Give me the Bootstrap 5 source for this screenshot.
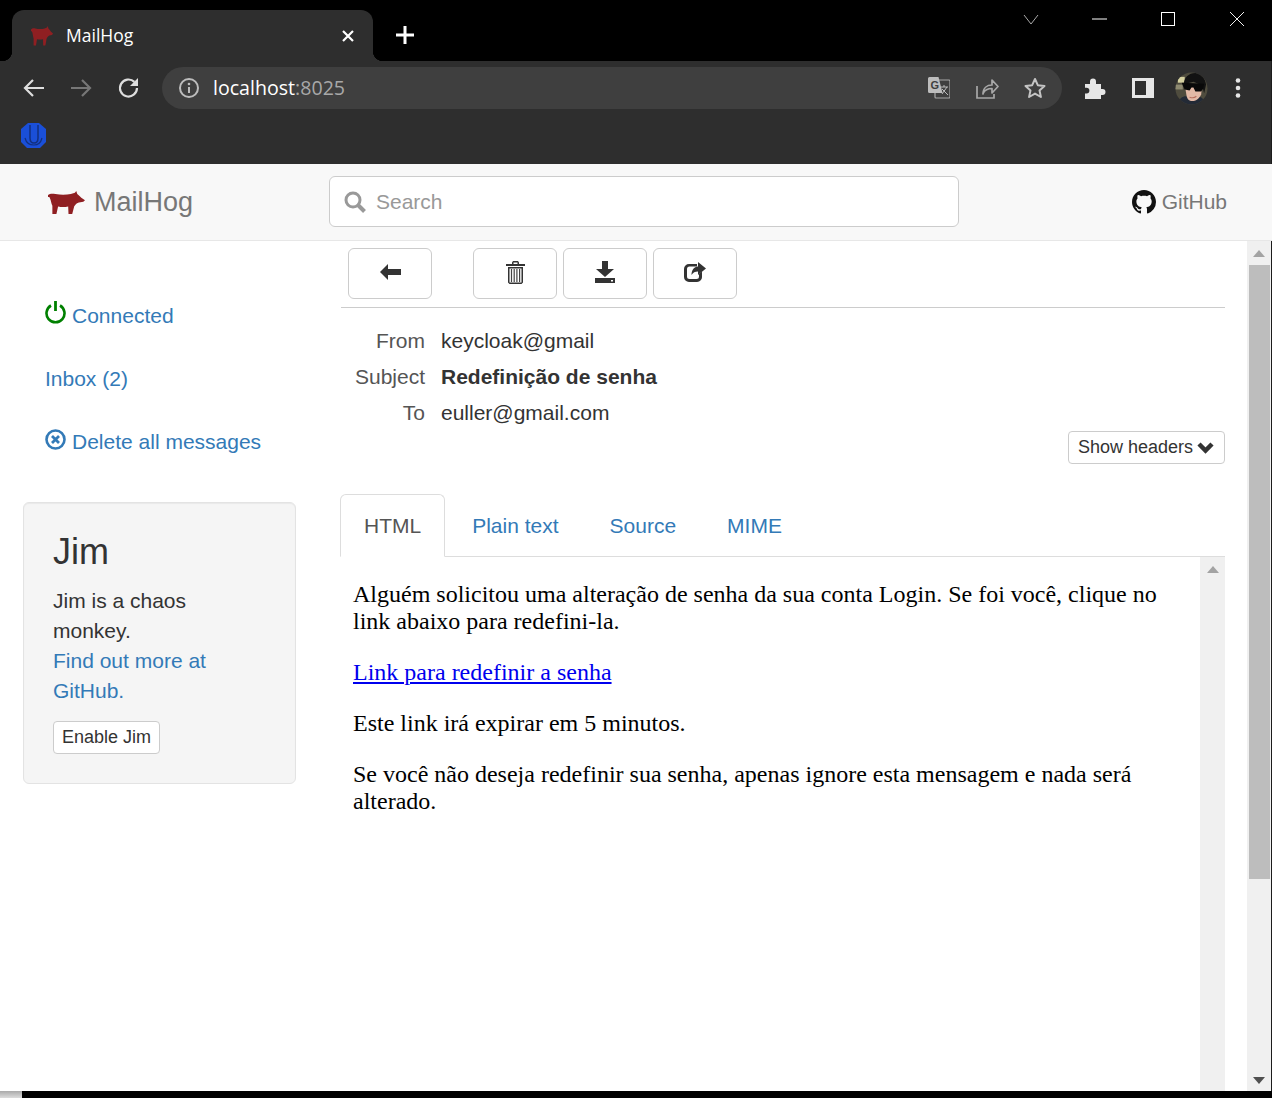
<!DOCTYPE html>
<html lang="en">
<head>
    <meta charset="UTF-8">
    <meta name="viewport" content="width=device-width, initial-scale=1">
    <title>MailHog</title>
    <link href="https://cdn.jsdelivr.net/npm/bootstrap@5.3.0/dist/css/bootstrap.min.css" rel="stylesheet">
    <script src="https://cdn.jsdelivr.net/npm/bootstrap@5.3.0/dist/js/bootstrap.bundle.min.js"></script>

    <style>
        html, body {
            height: 1098px;
            overflow: hidden;
        }
        body {
            background: #000;
            font-family: "Liberation Sans", Arial, sans-serif;
            font-size: 21px;
            line-height: 30px;
            color: #333;
        }
        a { color: #337ab7; }

        /* browser frame */
        .tab-strip {
            height: 61px;
            background: #000;
            padding: 10px 0 0 12px;
        }
        .browser-tab {
            position: relative;
            width: 361px;
            height: 51px;
            background: #2e2e2e;
            border-radius: 12px 12px 0 0;
            padding: 0 18px 0 19px;
            color: #fff;
            font-family: "Open Sans", sans-serif;
            font-size: 17.5px;
        }
        .browser-tab::before, .browser-tab::after {
            content: "";
            position: absolute;
            bottom: 0;
            width: 10px;
            height: 10px;
        }
        .browser-tab::before { left: -10px; background: radial-gradient(circle at 0 0, #000 10px, #2e2e2e 10.5px); }
        .browser-tab::after { right: -10px; background: radial-gradient(circle at 100% 0, #000 10px, #2e2e2e 10.5px); }
        .tab-title { margin-left: 13px; padding-bottom: 2px; }
        .new-tab { margin-left: 23px; }
        .win-controls { margin-left: auto; margin-right: 26px; gap: 50.7px; margin-top: -11px; height: 40px; }
        .browser-bar {
            height: 103px;
            background: #2e2e2e;
            border-right: 1px solid #1c1c1c;
        }
        .toolbar {
            height: 48px;
            padding: 6px 0 0 23px;
        }
        .nav-next { margin-left: 25px; }
        .omnibox {
            width: 900px;
            height: 42px;
            margin-left: 21px;
            background: #3f3f3f;
            border-radius: 21px;
            padding: 0 16px 0 17px;
            color: #fff;
            font-family: "Open Sans", sans-serif;
            font-size: 19.6px;
        }
        .omnibox .address { margin-left: 14px; }
        .omnibox .port { color: #a8a8a8; }
        .omni-right { margin-left: auto; gap: 25px; }
        .translate-icon { margin-right: 1px; }
        .toolbar-right { margin-left: 22px; }
        .sidepanel-icon { margin-left: 26px; }
        .avatar-icon { margin-left: 21px; }
        .dots-icon { margin-left: 27px; }
        .bookmarks { padding: 14px 0 0 21px; }

        /* mailhog navbar */
        .mh-navbar {
            height: 77px;
            background: #f8f8f8;
            border-bottom: 1px solid #e7e7e7;
            padding: 0 45px 0 48px;
        }
        .mh-brand {
            width: 281px;
            gap: 9px;
            font-size: 27px;
            color: #777;
        }
        .mh-search {
            width: 630px;
            height: 51px;
            margin-top: -1px;
            background: #fff;
            border: 1px solid #ccc;
            border-radius: 6px;
            padding: 0 14px;
            color: #999;
        }
        .mh-search span { margin-left: 10px; }
        .mh-github { margin-left: auto; gap: 6px; color: #777; }

        /* page */
        .page {
            height: 850px;
            background: #fff;
        }
        .sidebar {
            width: 340px;
            flex: none;
            padding: 60px 44px 0 23px;
        }
        .side-link {
            padding-left: 22px;
            margin-bottom: 33px;
            color: #337ab7;
        }
        .side-link svg { margin-right: 6px; vertical-align: -1px; }
        .jim-box {
            margin-top: 45px;
            width: 273px;
            height: 282px;
            background: #f5f5f5;
            border: 1px solid #e3e3e3;
            border-radius: 6px;
            box-shadow: inset 0 1px 1px rgba(0, 0, 0, .05);
            padding: 29px;
        }
        .jim-box h3 {
            font-family: inherit;
            font-size: 36px;
            line-height: 40px;
            margin: 0 0 14px;
            font-weight: 500;
        }
        .jim-box p { margin: 0 0 15px; }
        .btn-mh {
            background: #fff;
            border: 1px solid #ccc;
            border-radius: 4px;
            color: #333;
            font-size: 18px;
            line-height: 27px;
            padding: 2px 8px;
        }
        .message { width: 885px; flex: none; }
        .msg-tools { padding: 7px 0 8px 8px; }
        .tool-btn {
            width: 84px;
            height: 51px;
            padding: 0 0 3px;
            background: #fff;
            border: 1px solid #ccc;
            border-radius: 6px;
            color: #333;
        }
        .tool-btn svg { display: block; margin: auto; }
        .tool-gap { margin-left: 41px; }
        .tool-next { margin-left: 6px; }
        .msg-head {
            border-top: 1px solid #ccc;
            margin-left: 1px;
            padding-top: 15px;
        }
        .head-row { height: 36px; line-height: 36px; }
        .head-row .lbl { width: 84px; text-align: right; color: #555; }
        .head-row .val { margin-left: 16px; }
        .headers-btn { padding: 2px 10px 2px 9px; }
        .mh-tabs {
            margin-top: 30px;
            height: 63px;
            border-bottom: 1px solid #ddd;
            padding: 0;
        }
        .mh-tabs .nav-link {
            height: 63px;
            padding: 16px 23px;
            margin-right: 3px;
            line-height: 30px;
            color: #337ab7;
            border: 1px solid transparent;
            border-radius: 6px 6px 0 0;
        }
        .mh-tabs .nav-link.active {
            color: #555;
            border-color: #ddd #ddd #fff;
            background: #fff;
        }
        .msg-pane { height: 534px; }
        .msg-body {
            width: 860px;
            padding: 24px 13px;
            font-family: "Liberation Serif", "Times New Roman", serif;
            font-size: 24px;
            line-height: 27px;
            color: #000;
        }
        .msg-body p { margin: 0 0 24px; }
        .msg-body a { color: #00e; }
        .scroll-track {
            flex: none;
            background: #f0f0f0;
        }
        .pane-scroll { width: 25px; padding-top: 9px; }
        .page-scroll {
            width: 24px;
            margin-left: 22px;
            padding-bottom: 7px;
        }
        .scroll-up { display: block; margin: 9px auto 0; }
        .scroll-thumb {
            width: 21px;
            height: 614px;
            margin: 8px auto 0;
            background: #bdbdbd;
        }
        .scroll-down { display: block; margin: auto auto 0; }
        .right-edge { width: 1px; background: #1c1c1c; flex: none; }
        .task-edge { height: 7px; background: #000; }
        .task-edge div { width: 22px; height: 7px; background: linear-gradient(#aaa, #dcdcdc); }
    </style>
</head>
<body>

    <!-- Browser frame -->
    <div class="tab-strip d-flex align-items-start">
        <div class="browser-tab d-flex align-items-center">
            <svg width="22" height="20" viewBox="0 0 110 100"><path fill="#8f1f22" d="M0 18C6 10 14 11 22 12 40 16 55 15 68 12L80 7 84 0l3 13C92 18 96 24 99 28L110 38 105 45 92 48C86 50 82 56 78 64L72 98H61L60 66C50 68 40 68 30 66L25 98H13L13 62C10 54 9 42 7 34L4 26H0z"/></svg>
            <span class="tab-title">MailHog</span>
            <svg class="ms-auto" width="14" height="14" viewBox="0 0 14 14"><path d="M2 2l10 10M12 2 2 12" stroke="#fff" stroke-width="2.2"/></svg>
        </div>
        <svg class="new-tab mt-3" width="18" height="18" viewBox="0 0 18 18"><path d="M9 0v18M0 9h18" stroke="#fff" stroke-width="3"/></svg>
        <div class="win-controls d-flex align-items-center">
            <svg width="18" height="18" viewBox="0 0 18 18"><path d="M2 5l7 9 7-9" fill="none" stroke="#aaa" stroke-width="1"/></svg>
            <svg width="18" height="18" viewBox="0 0 18 18"><path d="M1 9h15" stroke="#fff" stroke-width="1"/></svg>
            <svg width="18" height="18" viewBox="0 0 18 18"><rect x="2.5" y="2.5" width="13" height="13" fill="none" stroke="#fff"/></svg>
            <svg width="18" height="18" viewBox="0 0 18 18"><path d="M2 2l14 14M16 2 2 16" stroke="#eee" stroke-width="1"/></svg>
        </div>
    </div>

    <div class="browser-bar">
        <div class="toolbar d-flex align-items-center">
            <svg width="22" height="20" viewBox="0 0 22 20"><path d="M21 10H2M10 2l-8 8 8 8" fill="none" stroke="#dedede" stroke-width="2.2"/></svg>
            <svg class="nav-next" width="22" height="20" viewBox="0 0 22 20"><path d="M1 10h19M12 2l8 8-8 8" fill="none" stroke="#777" stroke-width="2.2"/></svg>
            <svg class="nav-next" width="24" height="24" viewBox="0 0 24 24"><path d="M20 12a8.5 8.5 0 1 1-2.6-6.1" fill="none" stroke="#dedede" stroke-width="2.2"/><path d="M21 2v8h-8z" fill="#dedede"/></svg>
            <div class="omnibox d-flex align-items-center">
                <svg width="20" height="20" viewBox="0 0 20 20"><circle cx="10" cy="10" r="9" fill="none" stroke="#bdbdbd" stroke-width="2"/><path d="M10 9v6" stroke="#bdbdbd" stroke-width="2"/><circle cx="10" cy="6" r="1.3" fill="#bdbdbd"/></svg>
                <span class="address"><span>localhost</span><span class="port">:8025</span></span>
                <div class="omni-right d-flex align-items-center">
                    <svg class="translate-icon" width="22" height="22" viewBox="0 0 22 22"><rect x="7" y="3" width="15" height="18" rx="1" fill="#3f3f3f" stroke="#a8a8a8" stroke-width="1.2"/><path d="M0 1.5A1.5 1.5 0 0 1 1.5 0h9l4 16H1.5A1.5 1.5 0 0 1 0 14.5z" fill="#bdbdbd"/><text x="2.5" y="12" font-family="Liberation Sans" font-size="11" font-weight="700" fill="#3f3f3f">G</text><path d="M13 10h7M16 8v2M19 10l-5 7M14 12l6 6" fill="none" stroke="#bdbdbd" stroke-width="1"/></svg>
                    <svg width="23" height="22" viewBox="0 0 23 22"><path d="M1 9v12h17v-4" fill="none" stroke="#a8a8a8" stroke-width="1.7"/><path d="M7 17c0-6 4-9 9-9V3l6 6.5-6 6.5v-4.500c-4 0-7 1-9 5z" fill="none" stroke="#a8a8a8" stroke-width="1.7" stroke-linejoin="round"/></svg>
                    <svg width="22" height="22" viewBox="0 0 22 22"><path d="M11 2l2.8 6.2 6.7.7-5 4.5 1.4 6.6L11 16.600 5.100 20l1.400-6.600-5-4.500 6.700-.7z" fill="none" stroke="#c4c4c4" stroke-width="2" stroke-linejoin="round"/></svg>
                </div>
            </div>
            <div class="toolbar-right d-flex align-items-center">
                <svg width="22" height="22" viewBox="0 0 22 22"><path fill="#e6e6e6" d="M1 7h5V4.500a3 3 0 0 1 6 0V7h5v5h1.500a3 3 0 0 1 0 6H17v4H1v-5.500h1.500a2.900 2.900 0 0 0 0-5.800H1z"/></svg>
                <svg class="sidepanel-icon" width="22" height="22" viewBox="0 0 22 22"><path fill="#e6e6e6" fill-rule="evenodd" d="M0 1h22v20H0zM3 4v14h11V4z"/></svg>
                <svg class="avatar-icon" width="33" height="33" viewBox="0 0 34 34">
                    <defs><clipPath id="avatarClip"><circle cx="17" cy="17" r="16.5"/></clipPath></defs>
                    <g clip-path="url(#avatarClip)">
                        <rect width="34" height="34" fill="#4f4c3e"/>
                        <rect x="3" y="5" width="7" height="6" fill="#d4d0a0"/>
                        <rect x="0" y="13" width="8" height="5" fill="#8e8a70"/>
                        <path d="M2 34c1-5 4-8 8-9h14c4 1 7 4 8 9z" fill="#232a36"/>
                        <path d="M10 13h18l-1 10c-2 5-6 7-9 7-4 0-5-2-6-5z" fill="#e3b9a6"/>
                        <path d="M9 13c0-7 5-12 12-12 6 0 10 5 11 12l-2 9-2-8-9-4-8 2z" fill="#121212"/>
                        <path d="M7 11l23 1-1 5-2 3-6 0-2-4h-2l-2 3-5-1-2-4z" fill="#090909"/>
                        <path d="M15 26c3 1 6 0 7-1" fill="none" stroke="#b9705f" stroke-width="1.2"/>
                    </g>
                </svg>
                <svg class="dots-icon" width="6" height="20" viewBox="0 0 6 20"><circle cx="3" cy="2.5" r="2.3" fill="#e6e6e6"/><circle cx="3" cy="10" r="2.3" fill="#e6e6e6"/><circle cx="3" cy="17.5" r="2.3" fill="#e6e6e6"/></svg>
            </div>
        </div>
        <div class="bookmarks">
            <svg class="d-block" width="25" height="25" viewBox="0 0 25 25"><path fill="#1a4fd8" d="M7 0h11l7 6v13l-6 6H6l-6-6V6z"/><path d="M9 2v13c0 3 1.500 5 4 5s4-2 4-5V2" fill="none" stroke="#12307f" stroke-width="1.5"/><path d="M4 15c1 4 4 7 9 7s7-3 8-7" fill="none" stroke="#12307f" stroke-width="1.2"/></svg>
        </div>
    </div>

    <!-- MailHog navbar -->
    <nav class="navbar mh-navbar flex-nowrap">
        <a class="mh-brand d-flex align-items-center text-decoration-none" href="#">
            <svg width="37" height="23" viewBox="0 0 110 68"><path fill="#8f1f22" d="M0 12C6 7 14 8 22 9 40 12 55 11 68 9L80 5 84 0l3 9C92 13 96 17 99 20L110 27 105 32 92 34C86 35 82 40 78 45L72 68H61L60 46C50 48 40 48 30 46L25 68H13L13 44C10 38 9 30 7 24L4 18H0z"/></svg>
            <span>MailHog</span>
        </a>
        <div class="mh-search d-flex align-items-center">
            <svg width="22" height="22" viewBox="0 0 22 22"><circle cx="9" cy="9" r="7" fill="none" stroke="#999" stroke-width="3"/><path d="M14 14l6.5 6.5" stroke="#999" stroke-width="4"/></svg>
            <span>Search</span>
        </div>
        <a class="mh-github d-flex align-items-center text-decoration-none" href="#">
            <svg width="24" height="24" viewBox="0 0 16 16"><path fill="#111" d="M8 0C3.58 0 0 3.58 0 8c0 3.54 2.29 6.53 5.47 7.59.4.07.55-.17.55-.38 0-.19-.01-.82-.01-1.49-2.01.37-2.53-.49-2.69-.94-.09-.23-.48-.94-.82-1.13-.28-.15-.68-.52-.01-.53.63-.01 1.08.58 1.23.82.72 1.21 1.87.87 2.33.66.07-.52.28-.87.51-1.07-1.78-.2-3.64-.89-3.64-3.95 0-.87.31-1.59.82-2.15-.08-.2-.36-1.02.08-2.12 0 0 .67-.21 2.2.82.64-.18 1.32-.27 2-.27.68 0 1.36.09 2 .27 1.53-1.04 2.2-.82 2.2-.82.44 1.1.16 1.92.08 2.12.51.56.82 1.27.82 2.15 0 3.07-1.87 3.75-3.65 3.95.29.25.54.73.54 1.48 0 1.07-.01 1.93-.01 2.2 0 .21.15.46.55.38A8.012 8.012 0 0 0 16 8c0-4.42-3.58-8-8-8z"/></svg>
            <span>GitHub</span>
        </a>
    </nav>

    <div class="page d-flex">
        <!-- Sidebar -->
        <div class="sidebar">
            <div class="side-link">
                <svg width="21" height="23" viewBox="0 0 21 23"><path d="M6 4.5a9 9 0 1 0 9 0" fill="none" stroke="#008000" stroke-width="2.6"/><path d="M10.5 0v10" stroke="#008000" stroke-width="2.8"/></svg>Connected
            </div>
            <div class="side-link">Inbox (2)</div>
            <div class="side-link">
                <svg width="21" height="21" viewBox="0 0 21 21"><circle cx="10.5" cy="10.5" r="9" fill="none" stroke="#337ab7" stroke-width="2.6"/><path d="M7 7l7 7M14 7l-7 7" stroke="#337ab7" stroke-width="2.8"/></svg>Delete all messages
            </div>
            <div class="jim-box">
                <h3>Jim</h3>
                <p>Jim is a chaos monkey.<br><a class="text-decoration-none" href="#">Find out more at GitHub.</a></p>
                <button class="btn btn-mh" type="button">Enable Jim</button>
            </div>
        </div>

        <!-- Message -->
        <div class="message">
            <div class="msg-tools d-flex">
                <button class="btn tool-btn" type="button">
                    <svg width="21" height="16" viewBox="0 0 21 16"><path fill="#333" d="M0 8l8-8v5h13v6H8v5z"/></svg>
                </button>
                <button class="btn tool-btn tool-gap" type="button">
                    <svg width="19" height="23" viewBox="0 0 19 23"><path fill="#333" fill-rule="evenodd" d="M6 1.5 7 0h5l1 1.5V3h6v2H0V3h6zM7.5 3h4V1.5h-4zM2 6h15v15.5L15.5 23h-12L2 21.5zM3.5 7.5v14h12v-14z"/><path d="M5.5 8v13M8.200 8v13M10.900 8v13M13.600 8v13" stroke="#444" stroke-width="1.2"/></svg>
                </button>
                <button class="btn tool-btn tool-next" type="button">
                    <svg width="20" height="22" viewBox="0 0 20 22"><path fill="#333" d="M7 0h6v8h6l-9 8-9-8h6z"/><path fill="#333" fill-rule="evenodd" d="M0 17h20v5H0zm16 2v1.5h2V19z"/></svg>
                </button>
                <button class="btn tool-btn tool-next" type="button">
                    <svg width="22" height="20" viewBox="0 0 22 20"><path fill="#333" d="M5 2h8v2.5H5.500A2.500 2.500 0 0 0 3 7v7.500A2.500 2.500 0 0 0 5.500 17h7a2.500 2.500 0 0 0 2.500-2.500V12l3-2.500v5A5 5 0 0 1 13 20H5a5 5 0 0 1-5-5V7a5 5 0 0 1 5-5z"/><path fill="#333" d="M14 0l8 6.5L14 13V9.5c-3 0-5 1-6.5 3.5 0-5 2.500-8 6.500-8.500z"/></svg>
                </button>
            </div>

            <div class="msg-head">
                <div class="head-row d-flex"><div class="lbl">From</div><div class="val">keycloak@gmail</div></div>
                <div class="head-row d-flex"><div class="lbl">Subject</div><div class="val fw-bold">Redefinição de senha</div></div>
                <div class="head-row d-flex"><div class="lbl">To</div><div class="val">euller@gmail.com</div></div>
                <div class="d-flex justify-content-end">
                    <button class="btn btn-mh headers-btn d-flex align-items-center gap-1" type="button">Show headers
                        <svg width="17" height="13" viewBox="0 0 17 13"><path d="M2 3l6.5 6.5L15 3" fill="none" stroke="#333" stroke-width="4.5"/></svg>
                    </button>
                </div>
            </div>

            <ul class="nav nav-tabs mh-tabs">
                <li class="nav-item"><a class="nav-link active" href="#">HTML</a></li>
                <li class="nav-item"><a class="nav-link" href="#">Plain text</a></li>
                <li class="nav-item"><a class="nav-link" href="#">Source</a></li>
                <li class="nav-item"><a class="nav-link" href="#">MIME</a></li>
            </ul>

            <div class="msg-pane d-flex">
                <div class="msg-body">
                    <p>Alguém solicitou uma alteração de senha da sua conta Login. Se foi você, clique no link abaixo para redefini-la.</p>
                    <p><a href="#">Link para redefinir a senha</a></p>
                    <p>Este link irá expirar em 5 minutos.</p>
                    <p>Se você não deseja redefinir sua senha, apenas ignore esta mensagem e nada será alterado.</p>
                </div>
                <div class="scroll-track pane-scroll">
                    <svg class="d-block mx-auto" width="12" height="7" viewBox="0 0 12 7"><path fill="#a3a3a3" d="M6 0l6 7H0z"/></svg>
                </div>
            </div>
        </div>

        <!-- Page scrollbar -->
        <div class="scroll-track page-scroll d-flex flex-column">
            <svg class="scroll-up" width="12" height="7" viewBox="0 0 12 7"><path fill="#a3a3a3" d="M6 0l6 7H0z"/></svg>
            <div class="scroll-thumb"></div>
            <svg class="scroll-down" width="12" height="7" viewBox="0 0 12 7"><path fill="#505050" d="M0 0h12L6 7z"/></svg>
        </div>
        <div class="right-edge"></div>
    </div>

    <div class="task-edge"><div></div></div>

</body>
</html>
